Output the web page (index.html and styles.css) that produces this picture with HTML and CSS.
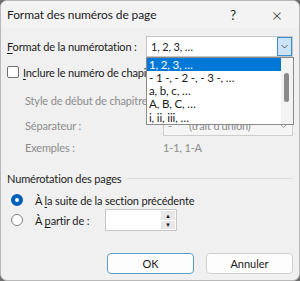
FILE: index.html
```html
<!DOCTYPE html>
<html lang="fr">

<head>
	<meta charset="utf-8">
	<title>Format des numéros de page</title>
	<link rel="stylesheet" href="styles.css">
</head>

<body>
	<div class="dialog">

		<div class="titlebar">
			<span class="title">Format des numéros de page</span>
			<span class="help">?</span>
			<span class="close">&times;</span>
		</div>

		<div class="content">

			<div class="row format-row">
				<span class="label"><u>F</u>ormat de la numérotation :</span>
				<div class="combo">
					<span class="combo-text">1, 2, 3, …</span>
					<span class="combo-btn">
						<svg width="7" height="5" viewBox="0 0 7 5"><path d="M0.5 1 L3.5 4 L6.5 1" fill="none" stroke="#555" stroke-width="1"/></svg>
					</span>

					<!-- open list of the combo, lies over the rows below -->
					<div class="dropdown">
						<div class="items">
							<div class="item selected">1, 2, 3, …</div>
							<div class="item">- 1 -, - 2 -, - 3 -, …</div>
							<div class="item">a, b, c, …</div>
							<div class="item">A, B, C, …</div>
							<div class="item">i, ii, iii, …</div>
						</div>
						<div class="scrollbar"><div class="thumb"></div></div>
					</div>
				</div>
			</div>

			<div class="row check-row">
				<span class="checkbox"></span>
				<span class="check-label"><u>I</u>nclure le numéro de chapi</span>
			</div>

			<div class="chapter">
				<span class="muted">Style de début de chapitre</span>
				<span></span>

				<span class="muted">Séparateur :</span>
				<div class="combo disabled sep">
					<span class="combo-text">-</span>
					<span class="sep-name">(trait d'union)</span>
					<svg width="9" height="5" viewBox="0 0 9 5"><path d="M0.5 0.5 L4.5 4.5 L8.5 0.5" fill="none" stroke="#999" stroke-width="1"/></svg>
				</div>

				<span class="muted">Exemples :</span>
				<span class="muted">1-1, 1-A</span>
			</div>

			<div class="group-head">
				<span>Numérotation des pages</span>
				<span class="group-line"></span>
			</div>

			<div class="row radio-row">
				<span class="radio checked"></span>
				<span>À <u>l</u>a suite de la section précédente</span>
			</div>

			<div class="row radio-row">
				<span class="radio"></span>
				<span class="start-label">À <u>p</u>artir de :</span>
				<div class="spin">
					<span class="spin-field"></span>
					<span class="spin-btns">
						<span class="spin-btn">&#9650;</span>
						<span class="spin-btn">&#9660;</span>
					</span>
				</div>
			</div>

			<div class="buttons">
				<button class="btn default">OK</button>
				<button class="btn">Annuler</button>
			</div>

		</div>
	</div>
</body>

</html>
```

FILE: styles.css
```css
body {
	margin: 0;
	padding: 0;
	width: 300px;
	height: 281px;
	background-color: #6e6e6e;
	font-family: Lato, "Noto Sans", sans-serif;
	font-size: 11px;
	letter-spacing: -0.15px;
	color: #1b1b1b;
}

u {
	text-decoration-thickness: 1px;
	text-underline-offset: 2px;
}

.dialog {
	box-sizing: border-box;
	width: 300px;
	height: 281px;
	background-color: #f0f0f0;
	border: 1px solid #b9b9b9;
	border-radius: 7px;
	overflow: hidden;
}

/* Title bar */
.titlebar {
	display: flex;
	align-items: center;
	height: 27px;
	padding-left: 6px;
	background-color: #f3f3f3;
}

.title {
	font-size: 12px;
	flex: 1;
	letter-spacing: -0.1px;
}

.help {
	width: 44px;
	text-align: center;
	font-size: 13px;
}

.close {
	width: 44px;
	text-align: center;
	font-size: 18px;
	font-weight: 300;
}

.content {
	padding: 0 6px;
}

.row {
	display: flex;
	align-items: center;
	white-space: nowrap;
}

/* Format row */
.format-row {
	height: 22px;
	margin-top: 7px;
	justify-content: space-between;
}

.combo {
	position: relative;
	box-sizing: border-box;
	display: flex;
	align-items: center;
	width: 147px;
	height: 21px;
	background-color: #fff;
	border: 1px solid #c5c5c5;
}

.combo-text {
	flex: 1;
	padding-left: 4px;
}

.combo-btn {
	box-sizing: border-box;
	display: flex;
	align-items: center;
	justify-content: center;
	width: 15px;
	height: 19px;
	background-color: #cce4f7;
	border: 1px solid #3d8fd6;
}

.dropdown {
	position: absolute;
	top: 20px;
	left: -1px;
	box-sizing: border-box;
	display: flex;
	width: 148px;
	height: 68px;
	background-color: #fff;
	border: 1px solid #8a8a8a;
	z-index: 2;
}

.items {
	flex: 1;
}

.item {
	height: 13.3px;
	line-height: 13px;
	padding-left: 2px;
	font-size: 11.5px;
	white-space: nowrap;
}

.item.selected {
	background-color: #0078d7;
	color: #fff;
}

.scrollbar {
	width: 12px;
	background-color: #f3f3f3;
	padding-top: 15px;
}

.thumb {
	width: 5px;
	height: 29px;
	margin-left: 3px;
	background-color: #8a8a8a;
	border-radius: 3px;
}

/* Checkbox */
.check-row {
	height: 18px;
	margin-top: 6px;
	gap: 4px;
}

.checkbox {
	box-sizing: border-box;
	width: 12px;
	height: 12px;
	background-color: #fff;
	border: 1px solid #6f6f6f;
	border-radius: 2px;
}

/* Chapter numbering settings */
.chapter {
	display: grid;
	grid-template-columns: 138px 130px;
	grid-template-rows: 25px 24px 21px;
	align-items: center;
	padding-left: 18px;
	margin-top: 7px;
	white-space: nowrap;
}

.muted {
	color: #8c8c8c;
}

.combo.disabled {
	width: 130px;
	height: 22px;
	background-color: #f5f5f5;
	border-color: #cdcdcd;
	color: #8c8c8c;
}

.sep {
	padding-right: 4px;
}

.sep .combo-text {
	flex: none;
	width: 21px;
}

.sep-name {
	flex: 1;
}

/* Page numbering group */
.group-head {
	display: flex;
	align-items: center;
	gap: 6px;
	margin-top: 12px;
	height: 16px;
}

.group-line {
	flex: 1;
	height: 1px;
	background-color: #dcdcdc;
}

.radio-row {
	height: 20px;
	gap: 12px;
	padding-left: 4px;
}

.group-head + .radio-row {
	margin-top: 4px;
}

.radio {
	box-sizing: border-box;
	width: 12px;
	height: 12px;
	border-radius: 50%;
	border: 1px solid #808080;
	background-color: #fff;
}

.radio.checked {
	border: 4px solid #005fb8;
	background-color: #fff;
}

.start-label {
	width: 58px;
}

.spin {
	display: flex;
	flex: none;
	box-sizing: border-box;
	width: 72px;
	height: 22px;
	background-color: #fff;
	border: 1px solid #c8c8c8;
}

.spin-field {
	flex: 1;
}

.spin-btns {
	display: flex;
	flex-direction: column;
	width: 14px;
	padding: 1px;
	gap: 1px;
}

.spin-btn {
	flex: 1;
	display: flex;
	align-items: center;
	justify-content: center;
	background-color: #e8e8e8;
	font-size: 6px;
	color: #222;
}

/* Bottom buttons */
.buttons {
	display: flex;
	justify-content: flex-end;
	gap: 12px;
	margin-top: 23px;
}

.btn {
	width: 87px;
	height: 21px;
	font-family: inherit;
	font-size: 11px;
	color: #1b1b1b;
	background-color: #fdfdfd;
	border: 1px solid #d0d0d0;
	border-radius: 4px;
}

.btn.default {
	border-color: #5b9fc9;
}
```
